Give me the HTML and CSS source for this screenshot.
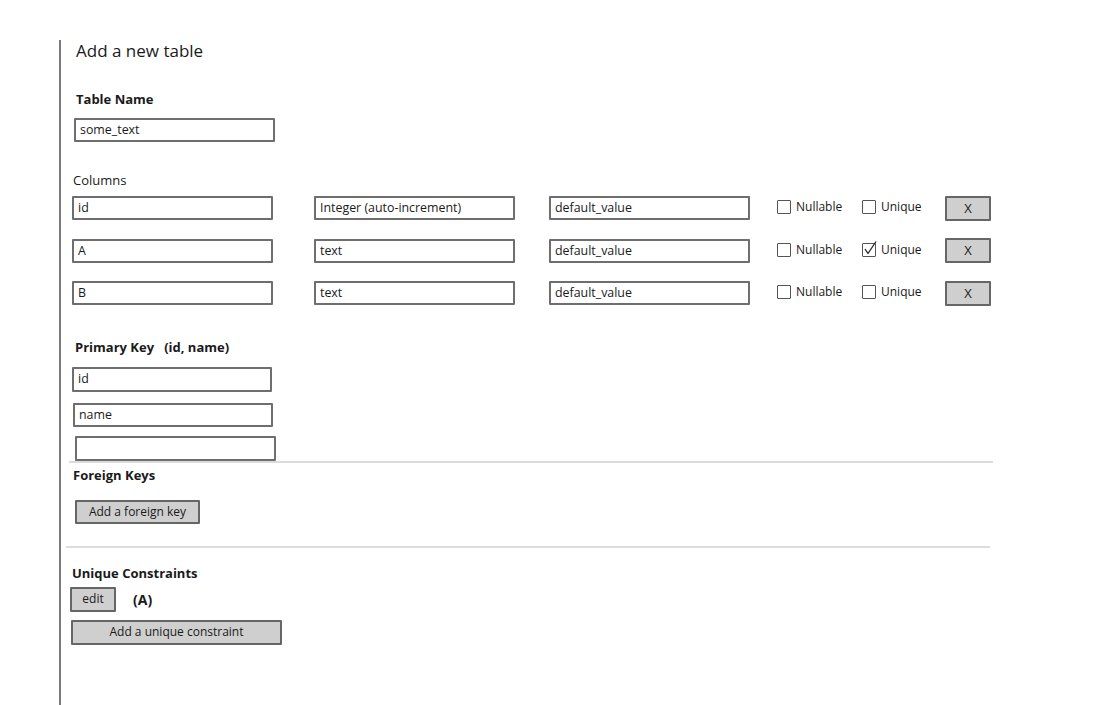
FILE: index.html
```html
<!DOCTYPE html>
<html>
<head>
<meta charset="utf-8">
<link rel="stylesheet" href="styles.css">
</head>
<body>
<div class="page">
  <h1 class="title">Add a new table</h1>

  <h2 class="label label-table">Table Name</h2>
  <div class="field field-table">some_text</div>

  <div class="label-plain">Columns</div>
  <div class="cols">
    <div class="field">id</div>
    <div class="field">Integer (auto-increment)</div>
    <div class="field">default_value</div>
    <label class="check"><span class="box"></span>Nullable</label>
    <label class="check"><span class="box"></span>Unique</label>
    <div class="btn btn-x">X</div>

    <div class="field">A</div>
    <div class="field">text</div>
    <div class="field">default_value</div>
    <label class="check"><span class="box"></span>Nullable</label>
    <label class="check"><span class="box checked"><svg width="17" height="16" viewBox="0 0 17 16"><path d="M3 8 L6 12.5 L14 0.5" fill="none" stroke="#222" stroke-width="1.3" stroke-linejoin="round"/></svg></span>Unique</label>
    <div class="btn btn-x">X</div>

    <div class="field">B</div>
    <div class="field">text</div>
    <div class="field">default_value</div>
    <label class="check"><span class="box"></span>Nullable</label>
    <label class="check"><span class="box"></span>Unique</label>
    <div class="btn btn-x">X</div>
  </div>

  <h2 class="label label-pk">Primary Key &nbsp;&nbsp;(id, name)</h2>
  <div class="field pk pk1">id</div>
  <div class="field pk pk2">name</div>
  <div class="field pk pk3"></div>
  <div class="sep sep1"></div>

  <h2 class="label label-fk">Foreign Keys</h2>
  <div class="btn btn-fk">Add a foreign key</div>
  <div class="sep sep2"></div>

  <h2 class="label label-uc">Unique Constraints</h2>
  <div class="uc-row">
    <div class="btn btn-edit">edit</div>
    <span class="uc-val">(A)</span>
  </div>
  <div class="btn btn-uc">Add a unique constraint</div>
</div>
</body>
</html>
```

FILE: styles.css
```css
* { box-sizing: border-box; }
html, body { margin: 0; padding: 0; background: #fff; }
body {
  font-family: "Open Sans", "Liberation Sans", sans-serif;
  color: #1a1a1a;
  width: 1106px;
  height: 705px;
  overflow: hidden;
}
.page {
  margin-left: 59px;
  margin-top: 40px;
  height: 665px;
  border-left: 2px solid #7a7a7a;
  padding-left: 11px;
  width: 950px;
}
.title {
  margin: 0 0 0 4px;
  font-size: 17px;
  font-weight: normal;
  line-height: 22px;
}
.label {
  margin: 0;
  font-size: 13px;
  font-weight: bold;
  line-height: 16px;
}
.label-table { margin: 29px 0 0 4px; }
.field {
  height: 24px;
  width: 201px;
  border: 2px solid #6e6e6e;
  border-radius: 1px;
  background: #fff;
  font-size: 12.4px;
  line-height: 20px;
  padding-left: 4px;
  white-space: nowrap;
}
.field-table { margin: 11px 0 0 2px; }
.label-plain {
  margin: 30px 0 0 1px;
  font-size: 13px;
  line-height: 16px;
}
.cols {
  margin-top: 8px;
  display: grid;
  grid-template-columns: 242px 235px 228px 85px 83px 46px;
  grid-auto-rows: 24px;
  row-gap: 18.5px;
  align-items: center;
}
.check {
  display: flex;
  align-items: center;
  gap: 5px;
  font-size: 12px;
  line-height: 16px;
  margin-top: -2px;
}
.box {
  position: relative;
  width: 14px;
  height: 14px;
  border: 1.6px solid #555;
  border-radius: 1px;
  flex: none;
}
.box svg {
  position: absolute;
  left: -1px;
  top: -3px;
}
.btn {
  background: #cfcfcf;
  border: 2px solid #666;
  border-radius: 1px;
  font-size: 12px;
  text-align: center;
  line-height: 20px;
  height: 25px;
}
.btn-x { width: 46px; font-size: 13px; }
.label-pk { margin: 34px 0 0 3px; }
.pk { width: 200px; }
.pk1 { margin: 12px 0 0 0; height: 25px; }
.pk2 { margin: 11px 0 0 1px; }
.pk3 { margin: 9px 0 0 3px; width: 201px; height: 25px; }
.sep {
  height: 2px;
  background: #dcdcdc;
  width: 924px;
}
.sep1 { margin: 0 0 0 -3px; }
.label-fk { margin: 4px 0 0 1px; }
.btn-fk { width: 125px; margin: 17px 0 0 3px; height: 24px; }
.sep2 { margin: 22px 0 0 -6px; }
.label-uc { margin: 17px 0 0 0; }
.uc-row {
  display: flex;
  align-items: center;
  gap: 17px;
  margin: 6px 0 0 -2px;
}
.btn-edit { width: 46px; }
.uc-val { font-size: 14px; font-weight: bold; }
.btn-uc { width: 211px; margin: 8px 0 0 -1px; }
```
